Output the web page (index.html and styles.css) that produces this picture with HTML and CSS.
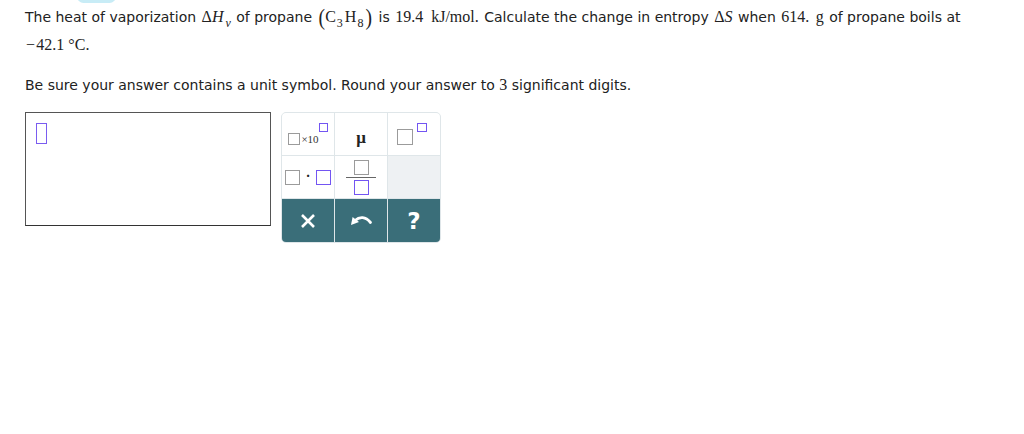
FILE: index.html
```html
<!DOCTYPE html>
<html>
<head>
<meta charset="utf-8">
<link rel="stylesheet" href="styles.css">
</head>
<body>
<div class="tab-hint"></div>
<div class="page">
  <p class="question">The heat of vaporization <span class="m">Δ<i>H</i><sub class="sv"><i>v</i></sub></span> of propane <span class="m formula"><span class="paren">(</span>C<sub>3</sub>H<sub>8</sub><span class="paren">)</span></span> is <span class="m">19.4&nbsp; kJ/mol.</span> Calculate the change in entropy <span class="m">Δ<i>S</i></span> when <span class="m">614.</span> <span class="m">g</span> of propane boils at <span class="m nowrap">−&#8202;42.1 °C.</span></p>
  <p class="instr">Be sure your answer contains a unit symbol. Round your answer to <span class="m">3</span> significant digits.</p>
  <div class="answer-row">
    <div class="answer-box"><span class="cursor"></span></div>
    <div class="keypad">
      <div class="key">
        <span class="sq sq-gray sq-11"></span><span class="x10">×10</span><span class="sq sq-purple sq-9 sup"></span>
      </div>
      <div class="key"><span class="mu">μ</span></div>
      <div class="key">
        <span class="sq sq-gray sq-16"></span><span class="sq sq-purple sq-9 sup2"></span>
      </div>
      <div class="key">
        <span class="sq sq-gray sq-15"></span><span class="dot">·</span><span class="sq sq-purple sq-15"></span>
      </div>
      <div class="key">
        <div class="frac">
          <span class="sq sq-gray sq-15"></span>
          <span class="bar"></span>
          <span class="sq sq-purple sq-15"></span>
        </div>
      </div>
      <div class="key key-empty"></div>
      <div class="key key-action">
        <svg width="16" height="16" viewBox="0 0 16 16"><path d="M2 2 L14 14 M14 2 L2 14" stroke="#fff" stroke-width="2.6" stroke-linecap="butt"/></svg>
      </div>
      <div class="key key-action">
        <svg width="23" height="13" viewBox="0 0 23 13"><path d="M5 6.5 C9.5 2.5 15.5 2.3 20.5 8.5" stroke="#fff" stroke-width="2.8" fill="none" stroke-linecap="round"/><path d="M1 11 L2.6 3 L9 8 Z" fill="#fff"/></svg>
      </div>
      <div class="key key-action"><span class="qm">?</span></div>
    </div>
  </div>
</div>
</body>
</html>
```

FILE: styles.css
```css
html, body {
  margin: 0;
  padding: 0;
  background: #ffffff;
}

body {
  font-family: "DejaVu Sans", Verdana, sans-serif;
  font-size: 14px;
  color: #222222;
  position: relative;
}

.tab-hint {
  position: absolute;
  left: 77px;
  top: -10px;
  width: 39px;
  height: 13px;
  border-radius: 7px;
  background: #c8ecf6;
}

.page {
  padding: 3px 0 0 25px;
}

.question {
  margin: 0;
  line-height: 27px;
  width: 960px;
}

.instr {
  margin: 16px 0 0 0;
  line-height: 20px;
}

.m {
  font-family: "Liberation Serif", "Times New Roman", serif;
  font-size: 16px;
  color: #222;
}

.question .m {
  margin: 0 1px;
}

.nowrap {
  white-space: nowrap;
}

.m i {
  font-style: italic;
}

.m sub {
  font-size: 12px;
  vertical-align: -5px;
  line-height: 1;
}

.m sub.sv {
  margin-left: 2px;
}

.formula sub {
  margin: 0 2px 0 1px;
}

.paren {
  font-size: 23px;
  display: inline-block;
  transform: scaleX(0.85) translateY(1px);
  line-height: 1;
  vertical-align: -2px;
}

.answer-row {
  display: flex;
  align-items: flex-start;
  gap: 10px;
  margin-top: 17px;
}

.answer-box {
  width: 246px;
  height: 114px;
  border: 1px solid #555555;
  border-bottom-color: #333;
  padding: 10px 0 0 10px;
  box-sizing: border-box;
}

.cursor {
  display: block;
  width: 9px;
  height: 19px;
  border: 1px solid #7a5cf0;
}

.keypad {
  display: grid;
  grid-template-columns: 52px 52px 52px;
  grid-template-rows: 42px 42px 43px;
  gap: 1px;
  background: #dfe6e9;
  border: 1px solid #dfe6e9;
  border-radius: 5px;
  overflow: hidden;
}

.key {
  background: #ffffff;
  display: flex;
  align-items: center;
  justify-content: center;
  position: relative;
}

.key-empty {
  background: #eef1f3;
}

.key-action {
  background: #3a6e79;
}

.sq {
  display: inline-block;
  box-sizing: border-box;
  border: 1px solid #9b9b9b;
}

.sq-purple {
  border-color: #7355f2;
}

.sq-11 { width: 12px; height: 12px; }
.sq-9 { width: 9px; height: 9px; }
.sq-15 { width: 15px; height: 15px; }
.sq-16 { width: 16px; height: 16px; }

.key .sq-11 {
  margin-top: 10px;
}

.x10 {
  font-family: "Liberation Serif", "Times New Roman", serif;
  font-size: 11px;
  color: #333;
  margin: 10px 0 0 1px;
}

.sup {
  align-self: flex-start;
  margin-top: 10px;
}

.key .sq-16 {
  margin: 6px 0 0 0;
}

.sup2 {
  align-self: flex-start;
  margin: 10px 4px 0 4px;
  width: 10px;
}

.mu {
  font-family: "Liberation Serif", "Times New Roman", serif;
  font-size: 17px;
  font-weight: bold;
  color: #222;
  margin-top: 8px;
}

.dot {
  font-family: "Liberation Serif", serif;
  font-size: 14px;
  font-weight: bold;
  margin: 0 6px;
  color: #222;
}

.frac {
  display: flex;
  flex-direction: column;
  align-items: center;
  gap: 2px;
}

.bar {
  display: block;
  width: 30px;
  height: 1px;
  background: #666;
}

.qm {
  font-family: "DejaVu Sans", Verdana, sans-serif;
  font-size: 23px;
  font-weight: bold;
  color: #ffffff;
}
```
